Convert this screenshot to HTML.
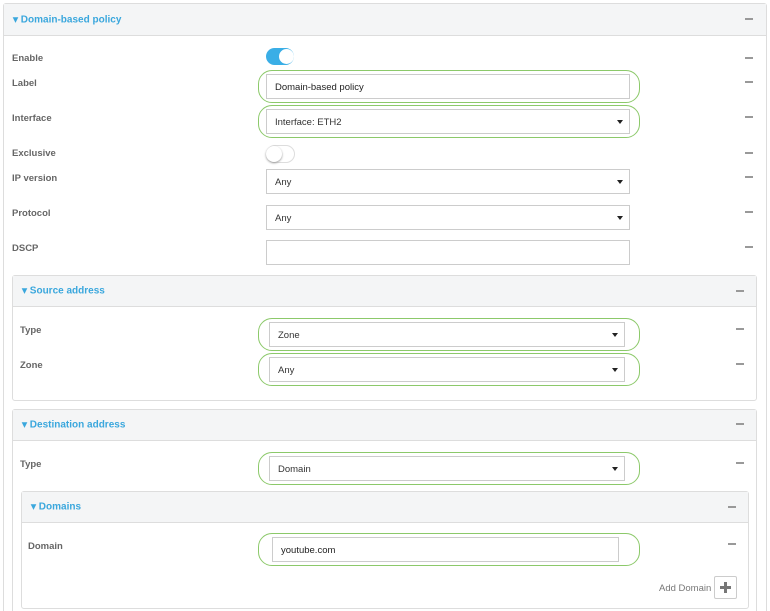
<!DOCTYPE html><html><head><style>
html,body{margin:0;width:770px;height:611px;overflow:hidden}
body{background:#fff;font-family:"Liberation Sans",sans-serif;font-size:10px;color:#555;position:relative}
.a{position:absolute}
.p{position:absolute;border:1px solid #ddd;border-radius:3px;background:#fff;box-sizing:border-box}
.h{position:absolute;left:0;right:0;top:0;background:#f4f5f6;border-bottom:1px solid #ddd;color:#3aa7dd;font-weight:bold}
.h span{position:absolute;left:9px;top:50%;transform:translateY(-50%)}
.m{position:absolute;width:8px;height:2px;background:#999}
.l{position:absolute;color:#666;font-weight:bold;font-size:9.5px}
.i{position:absolute;border:1px solid #ccc;background:#fff;box-sizing:border-box;color:#333;font-size:9.5px;padding-left:8px;padding-top:2px;display:flex;align-items:center}
.g{position:absolute;border:1.5px solid #8cc96a;border-radius:14px;box-sizing:border-box}
.c{position:absolute;right:6px;top:50%;margin-top:-2px;border-left:3px solid transparent;border-right:3px solid transparent;border-top:4px solid #222}
</style></head><body>
<div class="p" style="left:3px;top:3px;width:764px;height:608px;border-bottom:0;border-radius:3px 3px 0 0">
<div class="h" style="height:31px"><span>▾ Domain-based policy</span></div></div>
<div class="m" style="left:745px;top:18px"></div>

<div class="l" style="left:12px;top:53px">Enable</div>
<div class="a" style="left:266px;top:48px;width:28px;height:17px;border-radius:9px;background:#3aaee6"></div>
<div class="a" style="left:279px;top:49px;width:15px;height:15px;border-radius:50%;background:#fff"></div>
<div class="m" style="left:745px;top:57px"></div>

<div class="g" style="left:258px;top:70px;width:382px;height:33px"></div>
<div class="l" style="left:12px;top:78px">Label</div>
<div class="i" style="left:266px;top:74px;width:364px;height:25px;color:#222">Domain-based policy</div>
<div class="m" style="left:745px;top:81px"></div>

<div class="g" style="left:258px;top:105px;width:382px;height:33px"></div>
<div class="l" style="left:12px;top:113px">Interface</div>
<div class="i" style="left:266px;top:109px;width:364px;height:25px">Interface: ETH2<i class="c"></i></div>
<div class="m" style="left:745px;top:116px"></div>

<div class="l" style="left:12px;top:148px">Exclusive</div>
<div class="a" style="left:266px;top:145px;width:27px;height:16px;border-radius:9px;border:1px solid #ddd;background:#fff"></div>
<div class="a" style="left:266px;top:146px;width:16px;height:16px;border-radius:50%;background:#fff;box-shadow:0 1px 2px #999"></div>
<div class="m" style="left:745px;top:152px"></div>

<div class="l" style="left:12px;top:173px">IP version</div>
<div class="i" style="left:266px;top:169px;width:364px;height:25px">Any<i class="c"></i></div>
<div class="m" style="left:745px;top:176px"></div>

<div class="l" style="left:12px;top:208px">Protocol</div>
<div class="i" style="left:266px;top:205px;width:364px;height:25px">Any<i class="c"></i></div>
<div class="m" style="left:745px;top:211px"></div>

<div class="l" style="left:12px;top:243px">DSCP</div>
<div class="i" style="left:266px;top:240px;width:364px;height:25px"></div>
<div class="m" style="left:745px;top:246px"></div>

<div class="p" style="left:12px;top:275px;width:745px;height:126px">
<div class="h" style="height:30px"><span>▾ Source address</span></div></div>
<div class="m" style="left:736px;top:290px"></div>
<div class="g" style="left:258px;top:318px;width:382px;height:33px"></div>
<div class="l" style="left:20px;top:325px">Type</div>
<div class="i" style="left:269px;top:322px;width:356px;height:25px">Zone<i class="c"></i></div>
<div class="m" style="left:736px;top:328px"></div>
<div class="g" style="left:258px;top:353px;width:382px;height:33px"></div>
<div class="l" style="left:20px;top:360px">Zone</div>
<div class="i" style="left:269px;top:357px;width:356px;height:25px">Any<i class="c"></i></div>
<div class="m" style="left:736px;top:363px"></div>

<div class="p" style="left:12px;top:409px;width:745px;height:202px;border-bottom:0;border-radius:3px 3px 0 0">
<div class="h" style="height:30px"><span>▾ Destination address</span></div></div>
<div class="m" style="left:736px;top:423px"></div>
<div class="g" style="left:258px;top:452px;width:382px;height:33px"></div>
<div class="l" style="left:20px;top:459px">Type</div>
<div class="i" style="left:269px;top:456px;width:356px;height:25px">Domain<i class="c"></i></div>
<div class="m" style="left:736px;top:462px"></div>

<div class="p" style="left:21px;top:491px;width:728px;height:118px">
<div class="h" style="height:30px"><span>▾ Domains</span></div></div>
<div class="m" style="left:728px;top:506px"></div>
<div class="g" style="left:258px;top:533px;width:382px;height:33px"></div>
<div class="l" style="left:28px;top:541px">Domain</div>
<div class="i" style="left:272px;top:537px;width:347px;height:25px;color:#222">youtube.com</div>
<div class="m" style="left:728px;top:543px"></div>
<div class="a" style="left:659px;top:583px;color:#777;font-size:9.5px">Add Domain</div>
<div class="a" style="left:714px;top:576px;width:23px;height:23px;border:1px solid #ccc;border-radius:2px;box-sizing:border-box"></div>
<div class="a" style="left:720px;top:586px;width:11px;height:3px;background:#777"></div>
<div class="a" style="left:724px;top:582px;width:3px;height:11px;background:#777"></div>
</body></html>
